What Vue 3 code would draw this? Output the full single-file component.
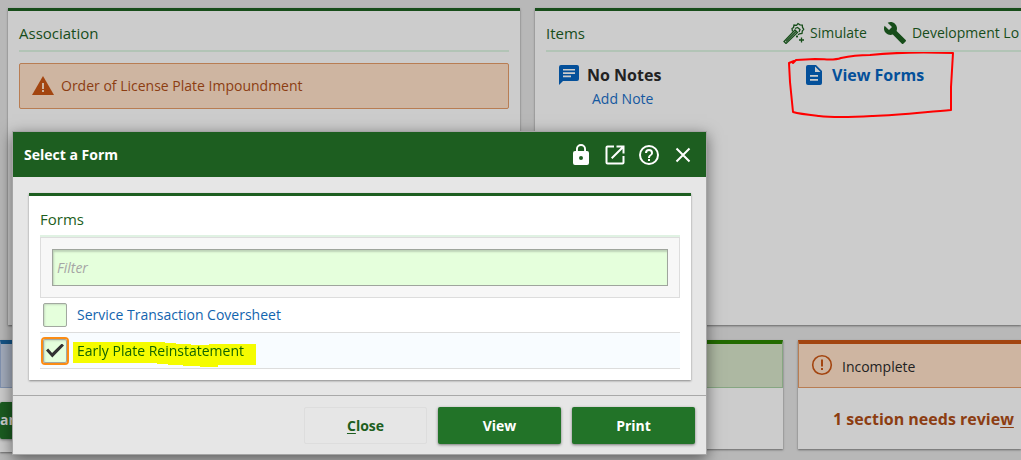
<script setup>
import { ref } from 'vue'

const filter = ref('')
const forms = ref([
  { id: 'coversheet', name: 'Service Transaction Coversheet', checked: false },
  { id: 'reinstatement', name: 'Early Plate Reinstatement', checked: true }
])
</script>

<template>
  <div class="page">
    <main class="board">
      <div class="row top">
        <section class="panel">
          <header class="panel-head"><h2>Association</h2></header>
          <div class="alert">
            <svg class="icon22" viewBox="0 0 22 22"><path fill="#a34510" d="M0 20h22L11 1z" /><path fill="#ceb5a1" d="M10 8h2v6h-2zM10 15h2v2h-2z" /></svg>
            <span>Order of License Plate Impoundment</span>
          </div>
        </section>
        <section class="panel items">
          <header class="panel-head">
            <h2>Items</h2>
            <nav class="tools">
              <a href="#simulate">
                <svg class="icon22" viewBox="0 0 22 22" fill="none" stroke="#174d1a" stroke-width="1.3"><path d="M12 8L1 19.500L3 21.500L14.500 10.500z" /><path d="M3 19.500L13 9.500" /><path d="M9.500 9.500L9 6.500l1.500-1L11 3l2.500.3L15 1.500l2 1.300 2.300.2.2 2.300 1.200 2-1.400 1.700-.3 2.500-2.500.3-1.500 1" /><path d="M12 6.500l2.500-1 2.500 2-1 2.500" /><path d="M18.500 15.500v5M16 18h5M14 13.500v2M13 14.500h2" /></svg>
                <span>Simulate</span>
              </a>
              <a href="#log">
                <svg class="icon24" viewBox="0 0 24 24" fill="#174d1a"><path d="M22.700 19l-9.100-9.100c.9-2.300.4-5-1.500-6.900-2-2-5-2.400-7.400-1.300L9 6 6 9 1.600 4.700C.4 7.100.9 10.100 2.900 12.100c1.900 1.900 4.600 2.400 6.900 1.500l9.100 9.100c.4.4 1 .4 1.400 0l2.300-2.300c.5-.4.5-1.100.1-1.400z" /></svg>
                <span>Development Lo</span>
              </a>
            </nav>
          </header>
          <div class="item-grid">
            <div class="item">
              <svg class="icon24" viewBox="0 0 24 24"><path fill="#04509a" d="M20 2H4a2 2 0 0 0-2 2v18l4-4h14a2 2 0 0 0 2-2V4a2 2 0 0 0-2-2z" /><path fill="#ccc" d="M6 6h12v1.600H6zM6 9.300h12v1.700H6zM6 12.500h8v1.700H6z" /></svg>
              <div>
                <strong>No Notes</strong>
                <a class="sub" href="#add-note">Add Note</a>
              </div>
            </div>
            <div class="item">
              <svg class="icon24" viewBox="0 0 24 24"><path fill="#04509a" d="M14 2H6a2 2 0 0 0-2 2v16a2 2 0 0 0 2 2h12a2 2 0 0 0 2-2V8z" /><path fill="#ccc" d="M13 3.500V9h5.500zM8 12h8v1.800H8zM8 16h8v1.800H8z" /></svg>
              <a class="view-forms" href="#forms">View Forms</a>
              <svg class="scribble" viewBox="0 0 168 68" fill="none" stroke="#f00" stroke-width="2" stroke-linejoin="round" stroke-linecap="round"><path d="M6 9L1 11L2 30L5 60C12 62 22 63 31 64C48 66 66 65 85 64C112 63 137 60 163 58L163 35L165 1C138 0 110 0 82 3C70 3 62 4 53 6C45 9 38 7 27 7L8 8L5 11" /></svg>
            </div>
          </div>
        </section>
      </div>

      <div class="row bottom">
        <section class="card blue">
          <div class="card-head"></div>
          <div class="card-body"><button type="button" class="solid edge">an</button></div>
        </section>
        <section class="card green">
          <div class="card-head"></div>
          <div class="card-body"></div>
        </section>
        <section class="card orange">
          <div class="card-head">
            <svg class="icon22" viewBox="0 0 22 22"><circle cx="11" cy="11" r="9.300" fill="none" stroke="#a34510" stroke-width="1.600" /><path fill="#a34510" d="M10 5.500h2v7h-2zM10 14h2v2h-2z" /></svg>
            <span>Incomplete</span>
          </div>
          <div class="card-body"><a href="#review">1 section needs revie<u>w</u></a></div>
        </section>
      </div>
    </main>

    <div class="modal" role="dialog" aria-labelledby="dialog-title">
      <header class="modal-head">
        <h1 id="dialog-title">Select a Form</h1>
        <button type="button" aria-label="Lock">
          <svg class="icon24" viewBox="0 0 24 24" fill="#fff"><path d="M18 8h-1V6A5 5 0 0 0 7 6v2H6a2 2 0 0 0-2 2v10a2 2 0 0 0 2 2h12a2 2 0 0 0 2-2V10a2 2 0 0 0-2-2zm-6 9a2 2 0 1 1 0-4 2 2 0 0 1 0 4zM8.900 8V6a3.100 3.100 0 0 1 6.200 0v2z" /></svg>
        </button>
        <button type="button" aria-label="Open in new window">
          <svg class="icon24" viewBox="0 0 24 24" fill="#fff"><path d="M19.500 19.500h-15v-15H11v-2H4.500a2 2 0 0 0-2 2v15a2 2 0 0 0 2 2h15a2 2 0 0 0 2-2V13h-2zM13.500 2.500v2h4.600L8 14.600 9.400 16 19.500 5.900v4.600h2v-8z" /></svg>
        </button>
        <button type="button" aria-label="Help">
          <svg class="icon24" viewBox="0 0 24 24" fill="#fff"><path d="M11 18h2v-2h-2zM12 2a10 10 0 1 0 0 20 10 10 0 0 0 0-20zm0 18a8 8 0 1 1 0-16 8 8 0 0 1 0 16zm0-14a4 4 0 0 0-4 4h2a2 2 0 1 1 4 0c0 2-3 1.750-3 5h2c0-2.250 3-2.500 3-5a4 4 0 0 0-4-4z" /></svg>
        </button>
        <button type="button" aria-label="Close dialog">
          <svg class="icon24" viewBox="0 0 24 24" fill="none" stroke="#fff" stroke-width="2"><path d="M5.500 5.500l13 13M18.500 5.500l-13 13" /></svg>
        </button>
      </header>

      <div class="modal-body">
        <section class="form-panel">
          <h2>Forms</h2>
          <div class="filter"><input v-model="filter" type="text" placeholder="Filter" aria-label="Filter" /></div>
          <ul>
            <li v-for="form in forms" :key="form.id" :class="{ selected: form.checked }">
              <input :id="form.id" v-model="form.checked" type="checkbox" />
              <label :for="form.id">{{ form.name }}</label>
              <svg v-if="form.checked" class="marker" viewBox="0 0 184 26" fill="#fcff00"><path d="M0 1H92V2H103V3H118V4H136V3H183V24H145V26H127V25H110V24H95V23H84V22H0z" /></svg>
            </li>
          </ul>
        </section>
      </div>

      <footer class="modal-foot">
        <button type="button" class="plain"><span><u>C</u>lose</span></button>
        <button type="button" class="solid">View</button>
        <button type="button" class="solid">Print</button>
      </footer>
    </div>
  </div>
</template>

<style>
body { margin: 0; background: #b8b8b8; }
</style>

<style scoped>
* { box-sizing: border-box; }
.page {
  position: relative;
  min-height: 100vh;
  overflow: hidden;
  background: #b8b8b8;
  color: #222;
  font: 14px/20px "Open Sans", "Noto Sans", sans-serif;
}
h1, h2, ul { margin: 0; padding: 0; }
h2 { font-size: 15px; line-height: 20px; font-weight: 500; }
a { color: #1558a0; text-decoration: none; }
button { font: inherit; cursor: pointer; }
svg { display: block; flex: none; }
.icon22 { width: 22px; height: 22px; }
.icon24 { width: 24px; height: 24px; }

.board { padding-top: 8px; }
.row { display: grid; column-gap: 15px; }
.top { grid-template-columns: 512fr 486fr; padding-left: 8px; }
.panel {
  min-width: 0;
  min-height: 317px;
  padding: 0 11px;
  border-top: 3px solid #174d1a;
  background: #ccc;
  box-shadow: 0 1px 2px #666;
}
.items { padding-right: 0; }
.panel-head {
  display: flex;
  align-items: center;
  height: 41px;
  padding-top: 4px;
  border-bottom: 2px solid #b2c4b6;
  color: #174d1a;
}
.items .panel-head h2 { flex: 0 0 237px; }
.tools { display: flex; flex: none; gap: 16px; white-space: nowrap; }
.tools a { display: flex; align-items: center; gap: 5px; color: #174d1a; }
.alert {
  display: flex;
  align-items: center;
  gap: 7px;
  height: 46px;
  margin-top: 11px;
  padding: 0 12px;
  border: 1px solid #b87d53;
  border-radius: 2px;
  background: #ceb5a1;
  color: #8c3d12;
}
.item-grid { display: grid; grid-template-columns: 245px 1fr; padding: 11px 0 0 11px; }
.item { position: relative; display: flex; align-items: flex-start; gap: 6px; }
.item strong, .view-forms { display: block; font-size: 16px; line-height: 24px; font-weight: 700; }
.view-forms { color: #04509a; }
.sub { display: block; padding-left: 5px; line-height: 24px; }
.scribble { position: absolute; left: -14px; top: -11px; width: 168px; height: 68px; }

.bottom {
  grid-template-columns: 384fr 384fr 223fr;
  align-items: start;
  margin-top: 15px;
}
.card { background: #ccc; box-shadow: 0 1px 2px #666; }
.card-head {
  display: flex;
  align-items: center;
  gap: 9px;
  height: 48px;
  padding: 4px 12px 0;
  border: 1px solid;
  border-top: 4px solid;
}
.card-body { display: flex; align-items: center; justify-content: center; height: 61px; }
.blue .card-head { border-color: #155487 #8193b0 #8193b0; background: #a3acbc; }
.blue .card-body { height: 64px; justify-content: flex-start; }
.green .card-head { border-color: #236b00 #86a682 #86a682; background: #adb8a2; }
.orange .card-head {
  padding-top: 2px;
  border-right: 0;
  border-color: #a34510 #b87d53 #b87d53;
  background: #ceb5a1;
}
.orange .card-head svg { margin-top: -4px; }
.orange .card-body { justify-content: flex-start; padding-left: 35px; }
.orange a { color: #8c3d12; font-size: 16px; font-weight: 700; white-space: nowrap; }
u { text-underline-offset: 2px; }

.modal {
  position: absolute;
  left: 12px;
  top: 131px;
  width: calc(100% - 24px);
  max-width: 695px;
  border: 1px solid #a5a5a5;
  background: #e6e6e6;
  box-shadow: 0 4px 14px rgba(0, 0, 0, .5);
}
.modal-head {
  display: flex;
  align-items: center;
  gap: 10px;
  height: 45px;
  padding: 0 11px;
  background: #1d5e20;
  color: #fff;
}
.modal-head h1 { flex: 1; font-size: 14px; line-height: 20px; font-weight: 700; }
.modal-head button { padding: 0; border: 0; background: none; }
.modal-body { padding: 16px 15px 15px 16px; }
.form-panel {
  padding: 0 11px 11px;
  border-top: 3px solid #1d5e20;
  background: #fff;
  box-shadow: 0 1px 2px #888;
}
.form-panel h2 {
  height: 41px;
  padding-top: 13px;
  border-bottom: 2px solid #e0f2e3;
  color: #1d5e20;
}
.filter { padding: 11px; border: 1px solid #ddd; background: #f7f7f7; }
.filter input {
  display: block;
  width: 100%;
  height: 37px;
  padding: 0 4px;
  border: 1px solid #9fa59d;
  border-radius: 0;
  background: #e5ffdc;
  box-shadow: inset 1px 2px 2px #bdd3b7;
  font: inherit;
}
.filter input::placeholder { color: #a5a5a5; font-style: italic; opacity: 1; }
ul { list-style: none; }
li {
  position: relative;
  display: flex;
  align-items: center;
  gap: 10px;
  height: 36px;
  padding-left: 3px;
  border-bottom: 1px solid #ddd;
  isolation: isolate;
}
li:first-child { height: 35px; }
li.selected { background: #f8fcff; }
li input {
  appearance: none;
  display: grid;
  place-items: center;
  width: 24px;
  height: 24px;
  margin: 0;
  border: 1px solid #a2a8a0;
  border-radius: 2px;
  background: #e5ffdc;
  box-shadow: inset 1px 1px 2px #c6dcc0;
}
li input:checked { outline: 2px solid #fb8c14; }
li input:checked::after {
  content: "";
  width: 18px;
  height: 14px;
  background: #333;
  clip-path: polygon(0 50%, 12% 36%, 34% 68%, 88% 0, 100% 14%, 35% 100%);
}
li label { color: #1264ae; }
.marker { position: absolute; left: 33px; top: 8px; width: 184px; height: 26px; mix-blend-mode: multiply; pointer-events: none; }
.modal-foot {
  display: flex;
  justify-content: flex-end;
  gap: 11px;
  padding: 11px 11px 10px;
  border-top: 1px solid #a9a9a9;
}
.solid, .plain { width: 123px; height: 37px; padding: 0; border-radius: 2px; font-weight: 700; }
.solid { border: 0; background: #227328; color: #fff; box-shadow: 0 1px 3px #777; }
.plain { border: 1px solid #ddd; background: #e6e6e6; color: #1d5e20; }
.edge { background: #1b5c20; color: #ccc; text-align: left; }
</style>
